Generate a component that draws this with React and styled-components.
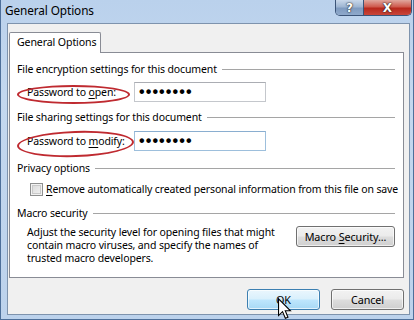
import React from 'react';
import styled, { createGlobalStyle } from 'styled-components';

const GlobalStyle = createGlobalStyle`
  html, body {
    margin: 0;
    padding: 0;
  }
  body {
    width: 414px;
    height: 320px;
    overflow: hidden;
    background: #ffffff;
    font-family: "Noto Sans", "Open Sans", sans-serif;
    color: #000;
  }
`;

const Window = styled.div`
  position: relative;
  width: 414px;
  height: 320px;
  box-sizing: border-box;
  display: flex;
  flex-direction: column;
  padding: 0 4px 5px 7px;
  background: linear-gradient(180deg, #bad1ec 0%, #c4d8ef 30%, #bcd2ec 100%);
  box-shadow: inset 1px 0 0 #4d6f9a, inset -1px 0 0 #4d6f9a, inset 0 -1px 0 #4d6f9a;
`;

const TitleBar = styled.div`
  height: 23px;
  flex: none;
  display: flex;
  align-items: flex-start;
  margin-left: -2px;
`;

const Title = styled.div`
  padding-top: 2px;
  font-size: 11.8px;
  line-height: 16px;
  letter-spacing: -0.1px;
  color: #000;
  white-space: nowrap;
`;

const Caption = styled.div`
  margin-left: auto;
  margin-right: -2px;
  display: flex;
  height: 15px;
  border: 1px solid #3b5478;
  border-top: none;
  border-radius: 0 0 5px 5px;
  overflow: hidden;
`;

const CaptionButton = styled.div`
  width: ${p => p.$w}px;
  height: 15px;
  display: flex;
  align-items: center;
  justify-content: center;
  color: #fff;
  font-family: "DejaVu Sans", sans-serif;
  font-weight: bold;
  font-size: ${p => p.$fs}px;
  text-shadow: 0 0 2px #2a2a2a, 0 0 1px #000;
  background: ${p => p.$red
    ? 'linear-gradient(180deg, #e0a79e 0%, #cf5a4d 45%, #b8281c 55%, #c9463a 100%)'
    : 'linear-gradient(180deg, #c9d8ea 0%, #9fb6d3 45%, #7f9bc0 55%, #8fa9cb 100%)'};
  & + & {
    border-left: 1px solid #3b5478;
  }
`;

const Body = styled.div`
  flex: 1;
  display: flex;
  flex-direction: column;
  background: #f0f0f0;
  border: 1px solid #7e93ad;
  padding: 8px 5px 0 1px;
`;

const TabStrip = styled.div`
  display: flex;
  position: relative;
  z-index: 1;
  margin-bottom: -1px;
`;

const Tab = styled.div`
  width: 92px;
  height: 21px;
  box-sizing: border-box;
  border: 1px solid #898c95;
  border-bottom: none;
  border-radius: 2px 2px 0 0;
  background: #fff;
  font-size: 10.6px;
  letter-spacing: -0.12px;
  line-height: 19px;
  padding-left: 7px;
  white-space: nowrap;
`;

const Panel = styled.div`
  height: 226px;
  box-sizing: border-box;
  background: #fff;
  border: 1px solid #898c95;
  padding: 8px 8px 0 7px;
  font-size: 10.5px;
  letter-spacing: -0.13px;
`;

const GroupHeader = styled.div`
  display: flex;
  align-items: center;
  height: 16px;
  line-height: 16px;
  margin-top: ${p => p.$mt || 0}px;
  white-space: nowrap;
  &::after {
    content: '';
    flex: 1;
    height: 1px;
    margin-left: 5px;
    background: #a5a5a5;
  }
`;

const FieldRow = styled.div`
  display: flex;
  align-items: center;
  height: 20px;
  margin-top: ${p => p.$mt}px;
  padding-left: 10px;
`;

const FieldLabel = styled.label`
  position: relative;
  width: 107px;
  flex: none;
  white-space: nowrap;
`;

const Ring = styled.span`
  position: absolute;
  left: -10px;
  top: ${p => p.$top}px;
  width: ${p => p.$w}px;
  height: ${p => p.$h}px;
  box-sizing: border-box;
  border: 2px solid #bf2a30;
  border-radius: 50%;
  transform: rotate(${p => p.$rot || 0}deg);
  pointer-events: none;
`;

const Key = styled.span`
  text-decoration: underline;
  text-underline-offset: 2px;
`;

const PasswordBox = styled.div`
  width: 132px;
  height: 20px;
  box-sizing: border-box;
  border: 1px solid ${p => (p.$focus ? '#9dbfdc' : '#c4c7cc')};
  border-top-color: ${p => (p.$focus ? '#8aaed0' : '#abadb3')};
  background: #fff;
  padding-left: 4px;
  display: flex;
  align-items: center;
  font-family: "Liberation Sans", Arial, sans-serif;
  font-size: 16px;
  font-weight: bold;
  letter-spacing: 1.1px;
  line-height: 1;
`;

const CheckRow = styled.div`
  display: flex;
  align-items: center;
  height: 16px;
  margin-top: 5px;
  padding-left: 13px;
  white-space: nowrap;
`;

const CheckBox = styled.span`
  width: 13px;
  height: 13px;
  box-sizing: border-box;
  flex: none;
  border: 1px solid #8e8f8f;
  background: linear-gradient(135deg, #d7d7d7 0%, #f4f4f4 100%);
  box-shadow: inset 0 0 0 1px #f2f2f2, inset 0 0 0 2px #c9c9c9;
  margin-right: 3px;
`;

const MacroRow = styled.div`
  display: flex;
  justify-content: space-between;
  align-items: flex-start;
  margin-top: 5px;
  padding-left: 10px;
`;

const MacroText = styled.p`
  margin: 0;
  line-height: 13px;
  white-space: nowrap;
`;

const PushButton = styled.button`
  position: relative;
  width: ${p => p.$w}px;
  height: 21px;
  box-sizing: border-box;
  padding: 0;
  margin: 0;
  border: 1px solid ${p => (p.$hot ? '#3c7fb1' : '#707070')};
  border-radius: 3px;
  font-family: "Noto Sans", "Open Sans", sans-serif;
  font-size: 10.8px;
  letter-spacing: -0.1px;
  color: #000;
  background: ${p => p.$hot
    ? 'linear-gradient(180deg, #eaf6fd 0%, #d9f0fc 48%, #bee6fd 52%, #a7d9f5 100%)'
    : 'linear-gradient(180deg, #f2f2f2 0%, #ebebeb 48%, #dddddd 52%, #cfcfcf 100%)'};
  box-shadow: inset 0 0 0 1px rgba(255, 255, 255, 0.65);
  cursor: default;
`;

const ButtonRow = styled.div`
  display: flex;
  justify-content: flex-end;
  gap: 11px;
  margin-top: 11px;
`;

const Pointer = styled.svg`
  position: absolute;
  left: 30px;
  top: 8px;
  width: 13px;
  height: 21px;
  overflow: visible;
`;

export default function App() {
  return (
    <>
      <GlobalStyle />
      <Window>
        <TitleBar>
          <Title>General Options</Title>
          <Caption>
            <CaptionButton $w={27} $fs={12}>?</CaptionButton>
            <CaptionButton $w={47} $fs={12} $red>X</CaptionButton>
          </Caption>
        </TitleBar>
        <Body>
          <TabStrip>
            <Tab>General Options</Tab>
          </TabStrip>
          <Panel>
            <GroupHeader>File encryption settings for this document</GroupHeader>
            <FieldRow $mt={5}>
              <FieldLabel>
                <Ring $top={0} $w={113} $h={19} />
                Password to <Key>o</Key>pen:
              </FieldLabel>
              <PasswordBox>••••••••</PasswordBox>
            </FieldRow>

            <GroupHeader $mt={7}>File sharing settings for this document</GroupHeader>
            <FieldRow $mt={6}>
              <FieldLabel>
                <Ring $top={-3} $w={117} $h={26} $rot={-2} />
                Password to <Key>m</Key>odify:
              </FieldLabel>
              <PasswordBox $focus>••••••••</PasswordBox>
            </FieldRow>

            <GroupHeader $mt={9}>Privacy options</GroupHeader>
            <CheckRow>
              <CheckBox />
              <span>
                <Key>R</Key>emove automatically created personal information from this file on save
              </span>
            </CheckRow>

            <GroupHeader $mt={8}>Macro security</GroupHeader>
            <MacroRow>
              <MacroText>
                Adjust the security level for opening files that might
                <br />
                contain macro viruses, and specify the names of
                <br />
                trusted macro developers.
              </MacroText>
              <PushButton $w={99}>
                Macro <Key>S</Key>ecurity...
              </PushButton>
            </MacroRow>
          </Panel>
          <ButtonRow>
            <PushButton $w={73} $hot>
              OK
              <Pointer viewBox="0 0 12 19">
                <path
                  d="M0.5 0.5 L0.5 16 L4.2 12.4 L6.8 18.5 L9.2 17.5 L6.7 11.6 L11.5 11.6 Z"
                  fill="#fff"
                  stroke="#000"
                  strokeWidth="1"
                  strokeLinejoin="miter"
                />
              </Pointer>
            </PushButton>
            <PushButton $w={73}>Cancel</PushButton>
          </ButtonRow>
        </Body>
      </Window>
    </>
  );
}
